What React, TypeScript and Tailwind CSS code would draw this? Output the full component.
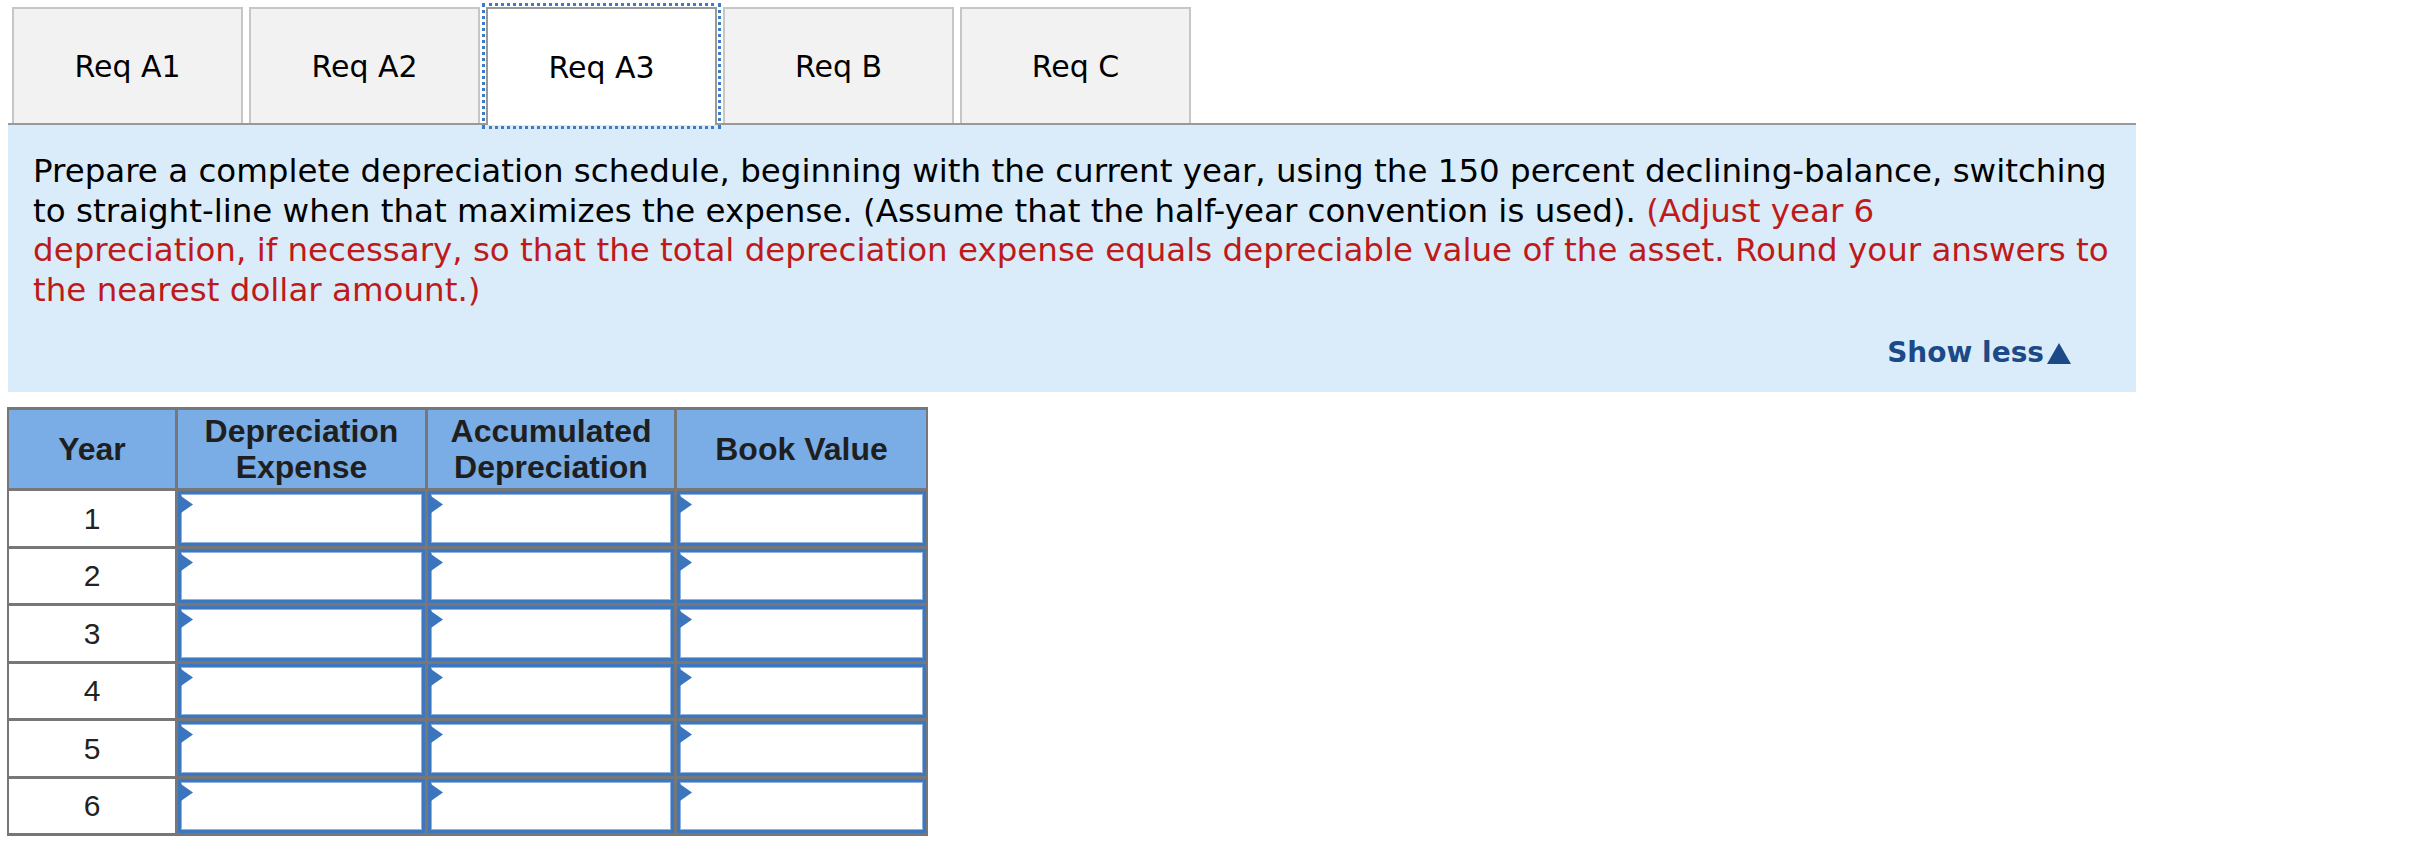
import React from "react";

const tabs = ["Req A1", "Req A2", "Req A3", "Req B", "Req C"];
const ACTIVE = "Req A3";
const years = [1, 2, 3, 4, 5, 6];

function InputCell() {
  return (
    <div className="relative bg-white border-[3px] border-[#3d77c0] shadow-[inset_0_0_0_1px_#8fb2df]">
      <svg
        className="absolute left-[-3px] top-[0px]"
        width="15"
        height="21"
        viewBox="0 0 15 21"
        aria-hidden
      >
        <polygon points="0,0 15,10.5 0,21" fill="#3a75bd" />
      </svg>
    </div>
  );
}

export default function App() {
  return (
    <div className="w-[2435px] h-[852px] overflow-hidden bg-white text-black font-['DejaVu_Sans',Verdana,sans-serif]">
      {/* tab strip */}
      <div className="ml-[8px] w-[2128px] pt-[7px] pl-[4px] flex items-start gap-[6px] border-b-2 border-[#999999]">
        {tabs.map((t) =>
          t === ACTIVE ? (
            <div
              key={t}
              className="relative z-10 w-[231px] h-[118px] -mb-[2px] flex items-center justify-center border-2 border-b-0 border-[#999999] bg-white text-[30px] outline-[3px] outline-dotted outline-[#3b7bc8] outline-offset-[1px]"
            >
              {t}
            </div>
          ) : (
            <div
              key={t}
              className="w-[231px] h-[116px] flex items-center justify-center border-2 border-b-0 border-[#c6c6c6] bg-[#f2f2f2] text-[30px]"
            >
              {t}
            </div>
          )
        )}
      </div>

      {/* instructions */}
      <div className="ml-[8px] w-[2128px] bg-[#daecf9] pl-[25px] pt-[27px] pb-[19px]">
        <p className="text-[32.5px] leading-[39.5px] whitespace-nowrap">
          Prepare a complete depreciation schedule, beginning with the current
          year, using the 150 percent declining-balance, switching
          <br />
          to straight-line when that maximizes the expense. (Assume that the
          half-year convention is used).{" "}
          <span className="text-[#bf1a1a]">
            (Adjust year 6
            <br />
            depreciation, if necessary, so that the total depreciation expense
            equals depreciable value of the asset. Round your answers to
            <br />
            the nearest dollar amount.)
          </span>
        </p>
        <div className="mt-[23px] flex justify-end pr-[65px]">
          <button className="flex items-center gap-[3px] text-[28px] leading-[40px] font-bold text-[#1b4a87]">
            Show less
            <svg width="24" height="21" viewBox="0 0 24 21" aria-hidden>
              <polygon points="12,0 24,21 0,21" fill="#1b4a87" />
            </svg>
          </button>
        </div>
      </div>

      {/* schedule */}
      <div className="ml-[7px] mt-[15px] w-fit grid grid-cols-[166px_247px_246px_249px] grid-rows-[78px_repeat(6,54.5px)] gap-[3px] px-[2px] py-[3px] bg-[#777777] font-['Liberation_Sans',Arial,sans-serif]">
        {["Year", "Depreciation\nExpense", "Accumulated\nDepreciation", "Book Value"].map((h) => (
          <div
            key={h}
            className="flex items-center justify-center bg-[#7aade5] text-center text-[32px] leading-[36px] font-bold text-[#1f1f1f] whitespace-pre-line"
          >
            {h}
          </div>
        ))}
        {years.map((y) => (
          <React.Fragment key={y}>
            <div className="flex items-center justify-center bg-white text-[30px] text-[#222222]">
              {y}
            </div>
            <InputCell />
            <InputCell />
            <InputCell />
          </React.Fragment>
        ))}
      </div>
    </div>
  );
}
